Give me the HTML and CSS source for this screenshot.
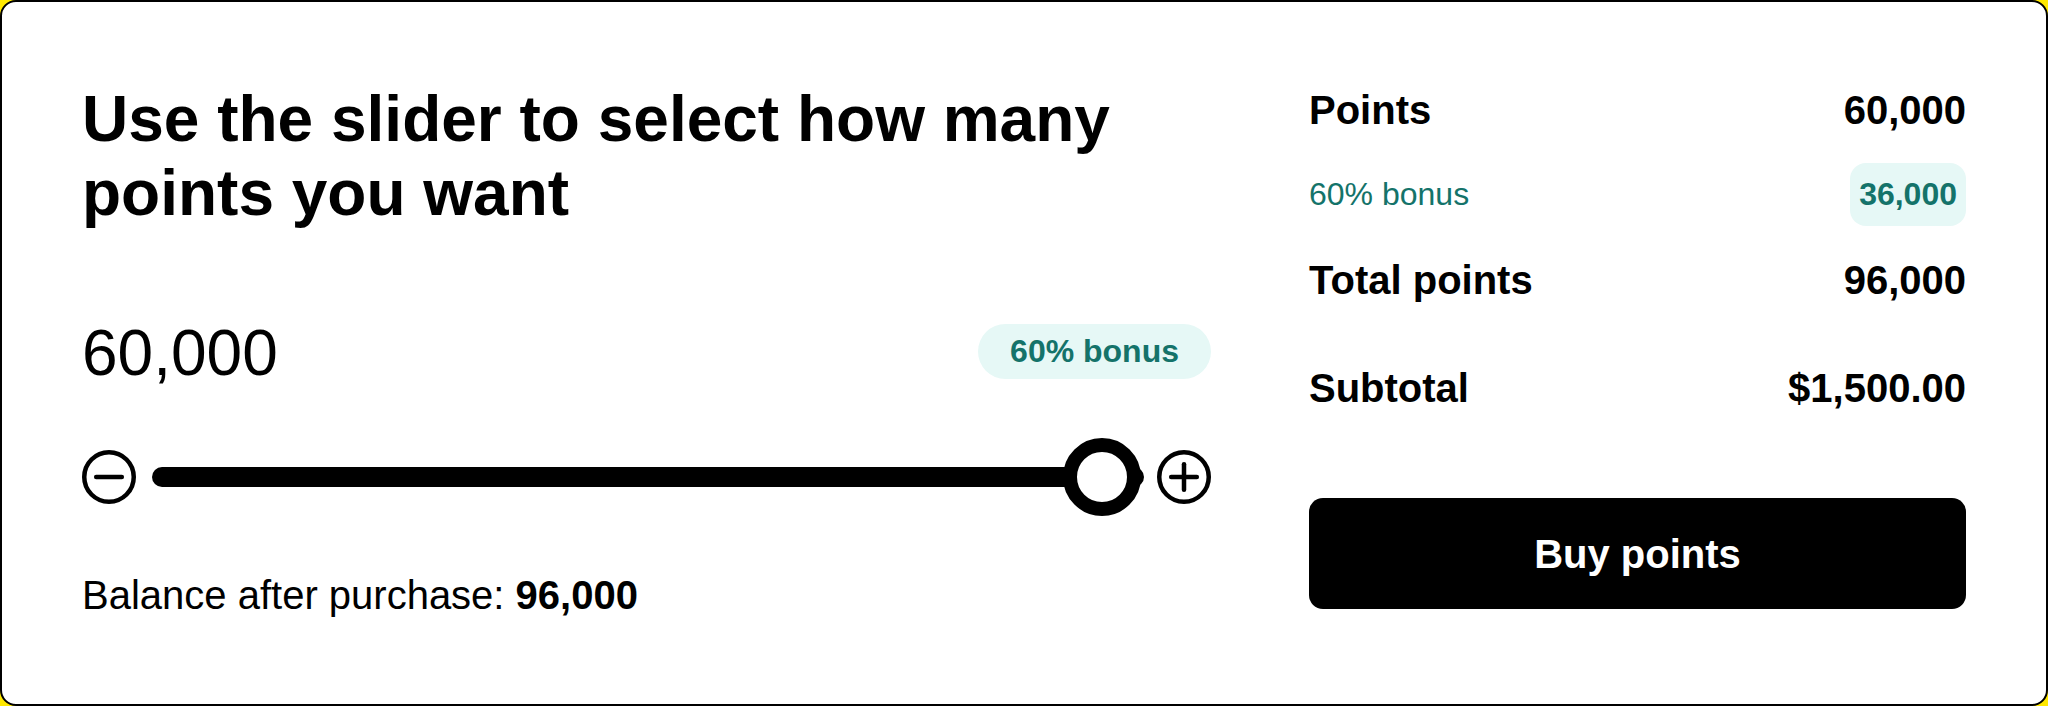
FILE: index.html
```html
<!DOCTYPE html>
<html lang="en">
<head>
<meta charset="utf-8">
<title>Buy points</title>
<link rel="stylesheet" href="styles.css">
</head>
<body>
<main class="card">
  <section class="picker">
    <h1 class="title">Use the slider to select how many points you want</h1>
    <div class="amount-row">
      <span class="amount">60,000</span>
      <span class="bonus-pill">60% bonus</span>
    </div>
    <div class="slider-row">
      <button class="step" aria-label="Decrease">
        <svg viewBox="0 0 24 24" width="54" height="54" fill="none" stroke="#000" stroke-width="2" stroke-linecap="round">
          <circle cx="12" cy="12" r="11"/>
          <line x1="6.3" y1="12" x2="17.7" y2="12"/>
        </svg>
      </button>
      <div class="track-wrap">
        <div class="track"></div>
        <div class="thumb"></div>
      </div>
      <button class="step" aria-label="Increase">
        <svg viewBox="0 0 24 24" width="54" height="54" fill="none" stroke="#000" stroke-width="2" stroke-linecap="round">
          <circle cx="12" cy="12" r="11"/>
          <line x1="6.3" y1="12" x2="17.7" y2="12"/>
          <line x1="12" y1="6.3" x2="12" y2="17.7"/>
        </svg>
      </button>
    </div>
    <p class="balance">Balance after purchase: <strong>96,000</strong></p>
  </section>
  <aside class="summary">
    <div class="row row-strong">
      <span>Points</span>
      <span>60,000</span>
    </div>
    <div class="row row-bonus">
      <span class="bonus-label">60% bonus</span>
      <span class="bonus-value">36,000</span>
    </div>
    <div class="row row-strong row-total">
      <span>Total points</span>
      <span>96,000</span>
    </div>
    <div class="row row-strong row-subtotal">
      <span>Subtotal</span>
      <span>$1,500.00</span>
    </div>
    <button class="buy">Buy points</button>
  </aside>
</main>
</body>
</html>
```

FILE: styles.css
```css
html, body {
  margin: 0;
  padding: 0;
  background: #ffe800;
}

body {
  font-family: "Liberation Sans", Arial, Helvetica, sans-serif;
  color: #000;
}

.card {
  box-sizing: border-box;
  width: 100vw;
  height: 100vh;
  background: #fff;
  border: 2px solid #000;
  border-radius: 16px;
  padding: 80px;
  display: grid;
  grid-template-columns: 1fr 657px;
  column-gap: 98px;
  align-items: start;
}

.picker {
  display: flex;
  flex-direction: column;
}

.title {
  margin: 0;
  font-size: 64px;
  line-height: 74px;
  font-weight: 700;
}

.amount-row {
  margin-top: 86px;
  display: flex;
  justify-content: space-between;
  align-items: center;
}

.amount {
  font-size: 64px;
  line-height: 74px;
  font-weight: 400;
}

.bonus-pill {
  background: #e6f8f6;
  color: #14736a;
  font-size: 32px;
  line-height: 39px;
  font-weight: 700;
  padding: 8px 32px;
  border-radius: 999px;
  margin-top: -3px;
}

.slider-row {
  margin-top: 48px;
  height: 78px;
  display: flex;
  align-items: center;
}

.step {
  width: 54px;
  height: 54px;
  padding: 0;
  margin: 0;
  border: 0;
  background: none;
  display: flex;
  flex: 0 0 auto;
}

.track-wrap {
  position: relative;
  flex: 1 1 auto;
  height: 78px;
  margin-left: 16px;
  margin-right: 13px;
  display: flex;
  align-items: center;
}

.track {
  width: 100%;
  height: 20px;
  border-radius: 10px;
  background: #000;
}

.thumb {
  position: absolute;
  right: 3px;
  top: 0;
  box-sizing: border-box;
  width: 78px;
  height: 78px;
  border-radius: 50%;
  border: 14px solid #000;
  background: #fff;
}

.balance {
  margin: 49px 0 0;
  font-size: 40px;
  line-height: 60px;
}

.balance strong {
  font-weight: 700;
}

.summary {
  display: flex;
  flex-direction: column;
  margin-top: -2px;
}

.row {
  display: flex;
  justify-content: space-between;
  align-items: center;
}

.row-strong {
  font-size: 40px;
  line-height: 60px;
  font-weight: 700;
}

.row-bonus {
  margin-top: 23px;
  color: #14736a;
  font-size: 32px;
  line-height: 39px;
}

.bonus-value {
  font-weight: 700;
  background: #e6f8f6;
  padding: 12px 9px;
  border-radius: 16px;
}

.row-total {
  margin-top: 24px;
}

.row-subtotal {
  margin-top: 48px;
}

.buy {
  margin-top: 80px;
  height: 111px;
  width: 100%;
  border: 0;
  border-radius: 14px;
  background: #000;
  color: #fff;
  font-family: "Liberation Sans", Arial, Helvetica, sans-serif;
  font-size: 40px;
  font-weight: 700;
  line-height: 46px;
  padding: 0;
}
```
